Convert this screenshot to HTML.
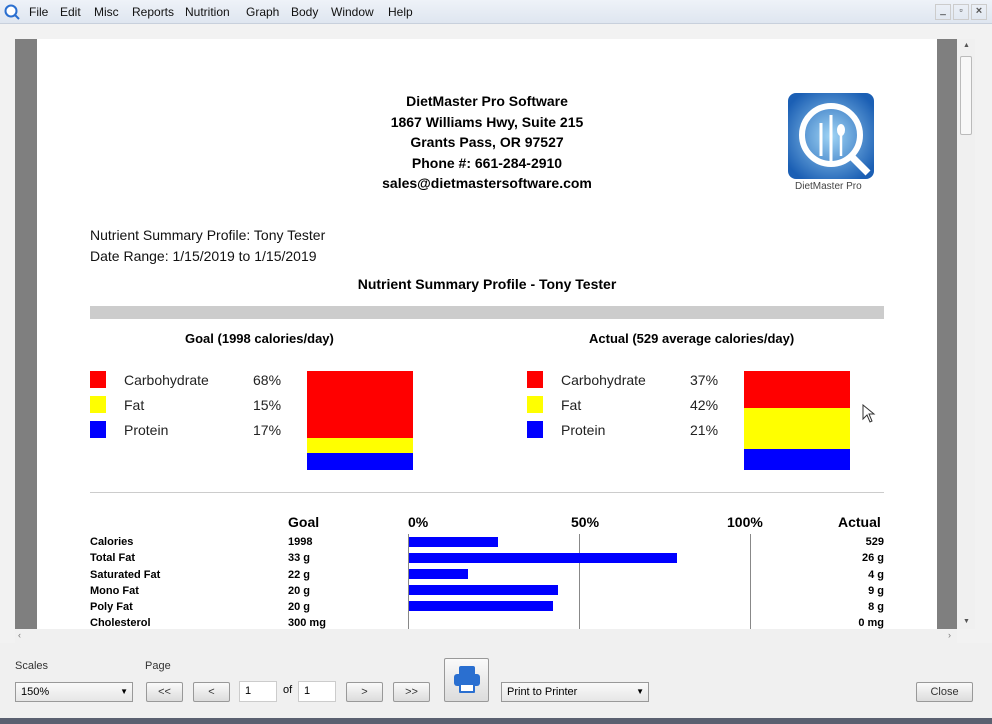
<!DOCTYPE html>
<html><head><style>
*{margin:0;padding:0;box-sizing:border-box}
body{width:992px;height:724px;position:relative;overflow:hidden;background:#f2f2f2;font-family:"Liberation Sans",sans-serif;}
.a{position:absolute;white-space:nowrap}
.menu{left:0;top:0;width:992px;height:24px;background:linear-gradient(#eef2f8,#dfe6f0);border-bottom:1px solid #c8d0dc;font-size:12px;color:#111}
.b{font-weight:bold}
.t{font-size:11px;font-weight:bold}
.btn{border:1px solid #999;background:linear-gradient(#fafafa,#dcdcdc);border-radius:2px;font-size:11px;text-align:center;line-height:18px;color:#333}
.inp{border:1px solid #ccc;background:#fff;font-size:11px;line-height:18px;padding-left:5px}
</style></head><body>
<div class="a menu">
 <svg class="a" style="left:4px;top:4px" width="16" height="16"><circle cx="7" cy="7" r="5.5" fill="#fff" stroke="#2a6fd0" stroke-width="2"/><line x1="11" y1="11" x2="15" y2="15" stroke="#2a6fd0" stroke-width="2"/></svg>
 <span class="a" style="left:29px;top:5px">File</span>
 <span class="a" style="left:60px;top:5px">Edit</span>
 <span class="a" style="left:94px;top:5px">Misc</span>
 <span class="a" style="left:132px;top:5px">Reports</span>
 <span class="a" style="left:185px;top:5px">Nutrition</span>
 <span class="a" style="left:246px;top:5px">Graph</span>
 <span class="a" style="left:291px;top:5px">Body</span>
 <span class="a" style="left:331px;top:5px">Window</span>
 <span class="a" style="left:388px;top:5px">Help</span>
 <div class="a" style="left:935px;top:4px;width:16px;height:16px;border:1px solid #ccc;font-size:10px;text-align:center">_</div>
 <div class="a" style="left:953px;top:4px;width:16px;height:16px;border:1px solid #ccc;font-size:9px;text-align:center">▫</div>
 <div class="a" style="left:971px;top:4px;width:16px;height:16px;border:1px solid #ccc;font-size:11px;text-align:center;font-weight:bold;color:#555">×</div>
</div>
<div class="a" style="left:15px;top:39px;width:22px;height:590px;background:#7f7f7f"></div>
<div class="a" style="left:37px;top:39px;width:900px;height:590px;background:#fff"></div>
<div class="a" style="left:937px;top:39px;width:20px;height:590px;background:#7f7f7f"></div>
<div class="a" style="left:957px;top:39px;width:18px;height:590px;background:#f0f0f0"></div>
<div class="a" style="left:960px;top:56px;width:12px;height:79px;border:1px solid #bbb;border-radius:2px;background:#f8f8f8"></div>
<div class="a" style="left:963px;top:42px;font-size:7px;color:#555">▲</div>
<div class="a" style="left:963px;top:618px;font-size:7px;color:#555">▼</div>
<div class="a" style="left:15px;top:629px;width:942px;height:14px;background:#f0f0f0"></div>
<div class="a" style="left:18px;top:630px;font-size:9px;color:#777">‹</div>
<div class="a" style="left:948px;top:630px;font-size:9px;color:#777">›</div>

<div class="a b" style="left:0;width:974px;top:91px;text-align:center;font-size:14px;line-height:20.6px">DietMaster Pro Software<br>1867 Williams Hwy, Suite 215<br>Grants Pass, OR 97527<br>Phone #: 661-284-2910<br>sales@dietmastersoftware.com</div>
<svg class="a" style="left:788px;top:93px" width="87" height="87"><defs><radialGradient id="g" cx="50%" cy="50%" r="60%"><stop offset="0" stop-color="#9fd4f5"/><stop offset="1" stop-color="#1b5fb4"/></radialGradient></defs><rect width="86" height="86" rx="8" fill="url(#g)"/><circle cx="43" cy="42" r="29" fill="none" stroke="#fff" stroke-width="6"/><line x1="62" y1="62" x2="80" y2="80" stroke="#fff" stroke-width="7"/><line x1="33" y1="30" x2="33" y2="63" stroke="#fff" stroke-width="3"/><line x1="43" y1="22" x2="43" y2="68" stroke="#fff" stroke-width="3"/><ellipse cx="53" cy="37" rx="4" ry="6" fill="#fff"/><line x1="53" y1="40" x2="53" y2="63" stroke="#fff" stroke-width="2.5"/></svg>
<div class="a" style="left:795px;top:181px;font-size:10px;color:#444">DietMaster Pro</div>

<div class="a" style="left:90px;top:225px;font-size:14px;line-height:21px;color:#111">Nutrient Summary Profile: Tony Tester<br>Date Range: 1/15/2019 to 1/15/2019</div>
<div class="a b" style="left:0;width:974px;top:276px;text-align:center;font-size:14px">Nutrient Summary Profile - Tony Tester</div>
<div class="a" style="left:90px;top:306px;width:794px;height:13px;background:#ccc"></div>

<div class="a b" style="left:185px;top:331px;font-size:13px">Goal (1998 calories/day)</div>
<div class="a b" style="left:589px;top:331px;font-size:13px">Actual (529 average calories/day)</div>

<div class="a" style="left:90px;top:371px;width:16px;height:17px;background:#f00"></div>
<div class="a" style="left:90px;top:396px;width:16px;height:17px;background:#ff0"></div>
<div class="a" style="left:90px;top:421px;width:16px;height:17px;background:#00f"></div>
<div class="a" style="left:124px;top:368px;font-size:14px;line-height:25px;color:#222">Carbohydrate<br>Fat<br>Protein</div>
<div class="a" style="left:253px;top:368px;font-size:14px;line-height:25px;color:#222">68%<br>15%<br>17%</div>
<div class="a" style="left:307px;top:371px;width:106px;height:67px;background:#f00"></div>
<div class="a" style="left:307px;top:438px;width:106px;height:15px;background:#ff0"></div>
<div class="a" style="left:307px;top:453px;width:106px;height:17px;background:#00f"></div>

<div class="a" style="left:527px;top:371px;width:16px;height:17px;background:#f00"></div>
<div class="a" style="left:527px;top:396px;width:16px;height:17px;background:#ff0"></div>
<div class="a" style="left:527px;top:421px;width:16px;height:17px;background:#00f"></div>
<div class="a" style="left:561px;top:368px;font-size:14px;line-height:25px;color:#222">Carbohydrate<br>Fat<br>Protein</div>
<div class="a" style="left:690px;top:368px;font-size:14px;line-height:25px;color:#222">37%<br>42%<br>21%</div>
<div class="a" style="left:744px;top:371px;width:106px;height:37px;background:#f00"></div>
<div class="a" style="left:744px;top:408px;width:106px;height:41px;background:#ff0"></div>
<div class="a" style="left:744px;top:449px;width:106px;height:21px;background:#00f"></div>
<svg class="a" style="left:862px;top:404px" width="14" height="20"><path d="M1 1 L1 15 L5 11 L8 18 L10 17 L7 10 L12 10 Z" fill="#fff" stroke="#333"/></svg>

<div class="a" style="left:90px;top:492px;width:794px;height:1px;background:#ccc"></div>

<div class="a b" style="left:288px;top:514px;font-size:14px">Goal</div>
<div class="a b" style="left:408px;top:514px;font-size:14px">0%</div>
<div class="a b" style="left:571px;top:514px;font-size:14px">50%</div>
<div class="a b" style="left:727px;top:514px;font-size:14px">100%</div>
<div class="a b" style="left:838px;top:514px;font-size:14px">Actual</div>
<div class="a" style="left:408px;top:534px;width:1px;height:95px;background:#888"></div>
<div class="a" style="left:579px;top:534px;width:1px;height:95px;background:#888"></div>
<div class="a" style="left:750px;top:534px;width:1px;height:95px;background:#888"></div>
<div class="a t" style="left:90px;top:534px;line-height:16.3px">Calories<br>Total Fat<br>Saturated Fat<br>Mono Fat<br>Poly Fat<br>Cholesterol</div>
<div class="a t" style="left:288px;top:534px;line-height:16.3px">1998<br>33 g<br>22 g<br>20 g<br>20 g<br>300 mg</div>
<div class="a t" style="left:800px;width:84px;text-align:right;top:534px;line-height:16.3px">529<br>26 g<br>4 g<br>9 g<br>8 g<br>0 mg</div>
<div class="a" style="left:409px;top:537px;width:89px;height:10px;background:#00f"></div>
<div class="a" style="left:409px;top:553px;width:268px;height:10px;background:#00f"></div>
<div class="a" style="left:409px;top:569px;width:59px;height:10px;background:#00f"></div>
<div class="a" style="left:409px;top:585px;width:149px;height:10px;background:#00f"></div>
<div class="a" style="left:409px;top:601px;width:144px;height:10px;background:#00f"></div>

<div class="a" style="left:0;top:643px;width:992px;height:81px;background:#f0f0f0"></div>
<div class="a" style="left:15px;top:660px;font-size:11px;color:#333">Scales</div>
<div class="a" style="left:145px;top:660px;font-size:11px;color:#333">Page</div>
<div class="a inp" style="left:15px;top:682px;width:118px;height:20px;border-color:#999;background:linear-gradient(#fafafa,#e6e6e6)">150%<span style="position:absolute;right:4px;font-size:8px">▼</span></div>
<div class="a btn" style="left:146px;top:682px;width:37px;height:20px">&lt;&lt;</div>
<div class="a btn" style="left:193px;top:682px;width:37px;height:20px">&lt;</div>
<div class="a inp" style="left:239px;top:681px;width:38px;height:21px">1</div>
<div class="a" style="left:283px;top:684px;font-size:11px">of</div>
<div class="a inp" style="left:298px;top:681px;width:38px;height:21px">1</div>
<div class="a btn" style="left:346px;top:682px;width:37px;height:20px">&gt;</div>
<div class="a btn" style="left:393px;top:682px;width:37px;height:20px">&gt;&gt;</div>
<div class="a btn" style="left:444px;top:658px;width:45px;height:44px"></div>
<svg class="a" style="left:452px;top:664px" width="30" height="32"><rect x="7" y="2" width="16" height="10" rx="2" fill="#2a6fd0"/><rect x="2" y="10" width="26" height="12" rx="3" fill="#2a6fd0"/><rect x="7" y="19" width="16" height="10" rx="1" fill="#2a6fd0"/><rect x="9" y="21" width="12" height="6" fill="#fff"/></svg>
<div class="a inp" style="left:501px;top:682px;width:148px;height:20px;border-color:#999;background:linear-gradient(#fafafa,#e6e6e6)">Print to Printer<span style="position:absolute;right:4px;font-size:8px">▼</span></div>
<div class="a btn" style="left:916px;top:682px;width:57px;height:20px">Close</div>
<div class="a" style="left:0;top:718px;width:992px;height:6px;background:#5a6070"></div>
</body></html>
